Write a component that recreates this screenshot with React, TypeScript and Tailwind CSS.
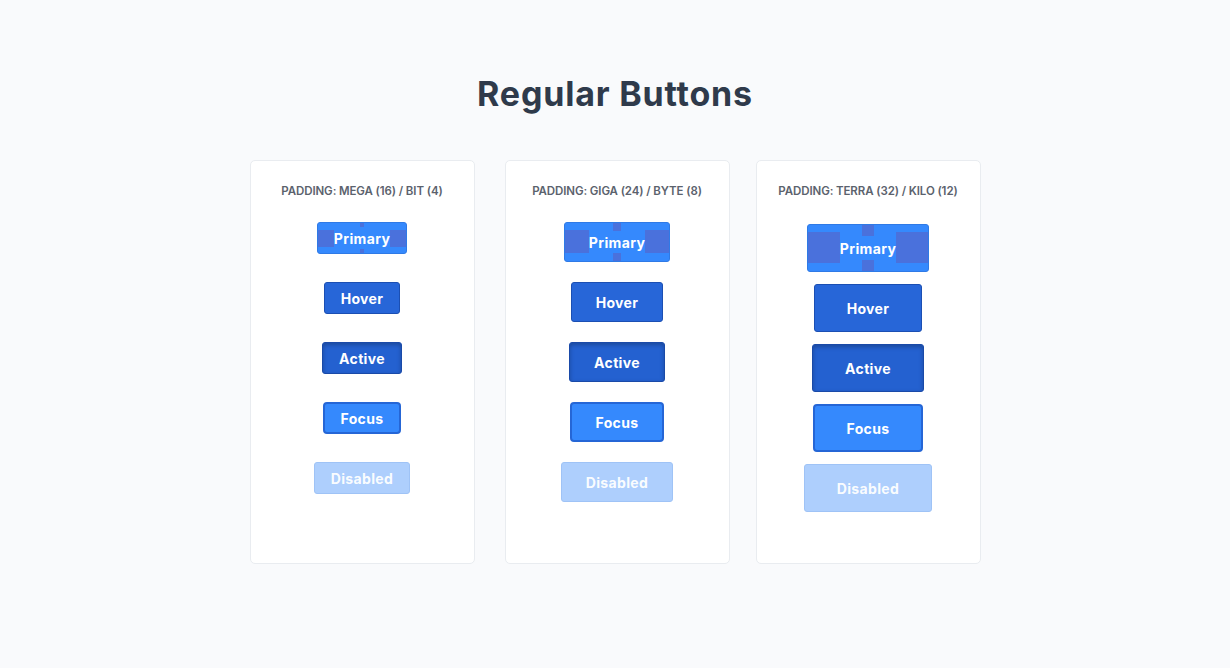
import React from "react";

type Col = {
  title: string;
  px: number;
  py: number;
  gap: string;
  pad: string;
  h: string;
  ov: { top: number; h: number; mh: number };
  offset: string;
};

const FONT = { fontFamily: "Inter, 'Noto Sans', sans-serif" };

const cols: Col[] = [
  {
    title: "PADDING: MEGA (16) / BIT (4)",
    px: 16,
    py: 4,
    gap: "gap-[28px]",
    pad: "px-4",
    h: "h-[32px]",
    ov: { top: 8, h: 17, mh: 4 },
    offset: "mt-[23px]",
  },
  {
    title: "PADDING: GIGA (24) / BYTE (8)",
    px: 24,
    py: 8,
    gap: "gap-[20px]",
    pad: "px-6",
    h: "h-[40px]",
    ov: { top: 8, h: 23, mh: 8 },
    offset: "mt-[23px]",
  },
  {
    title: "PADDING: TERRA (32) / KILO (12)",
    px: 32,
    py: 12,
    gap: "gap-[12px]",
    pad: "px-8",
    h: "h-[48px]",
    ov: { top: 8, h: 31, mh: 11 },
    offset: "mt-[25px]",
  },
];

function Card({ c, className }: { c: Col; className?: string }) {
  const base = `relative flex items-center justify-center rounded-[3px] text-[14px] font-bold tracking-[0.35px] text-white ${c.pad} ${c.h}`;
  return (
    <div
      className={`w-[225px] h-[404px] bg-white border border-[#e9ecf0] rounded-[5px] flex flex-col items-center pt-[22px] ${className ?? ""}`}
    >
      <div className="text-[11.5px] leading-[16px] font-semibold text-[#5b626d] tracking-[-0.1px]">{c.title}</div>
      <div className={`flex flex-col items-center ${c.gap} ${c.offset}`}>
        <div className={`${base} bg-[#3589fd] border border-[#2f7ae6]`}>
          <span
            className="absolute left-0 bg-[#4a71dc]"
            style={{ top: c.ov.top - 1, height: c.ov.h, width: c.px }}
          />
          <span
            className="absolute right-0 bg-[#4a71dc]"
            style={{ top: c.ov.top - 1, height: c.ov.h, width: c.px }}
          />
          <span
            className="absolute left-1/2 -translate-x-1/2 top-0 bg-[#4a71dc]"
            style={{ width: c.py, height: c.ov.mh }}
          />
          <span
            className="absolute left-1/2 -translate-x-1/2 bottom-0 bg-[#4a71dc]"
            style={{ width: c.py, height: c.ov.mh }}
          />
          <span className="relative">Primary</span>
        </div>
        <div className={`${base} bg-[#2766d8] border border-[#1b4fb3]`}>Hover</div>
        <div className={`${base} bg-[#2461d0] border border-[#1a4aa8] shadow-[inset_0_2px_4px_rgba(0,0,0,0.25)]`}>
          Active
        </div>
        <div className={`${base} bg-[#3589fd] border-2 border-[#2566d6] rounded-[4px]`}>Focus</div>
        <div className={`${base} bg-[#aecffd] border border-[#9fc3f6] text-white/95`}>Disabled</div>
      </div>
    </div>
  );
}

export default function App() {
  return (
    <div className="min-h-screen w-full bg-[#f9fafc] flex flex-col items-center pt-[73px]" style={FONT}>
      <h1 className="text-[34px] leading-[42px] font-bold text-[#2f3a4b] tracking-[0.8px]">Regular Buttons</h1>
      <div className="flex mt-[45px]">
        <Card c={cols[0]} />
        <Card c={cols[1]} className="ml-[30px]" />
        <Card c={cols[2]} className="ml-[26px]" />
      </div>
    </div>
  );
}
